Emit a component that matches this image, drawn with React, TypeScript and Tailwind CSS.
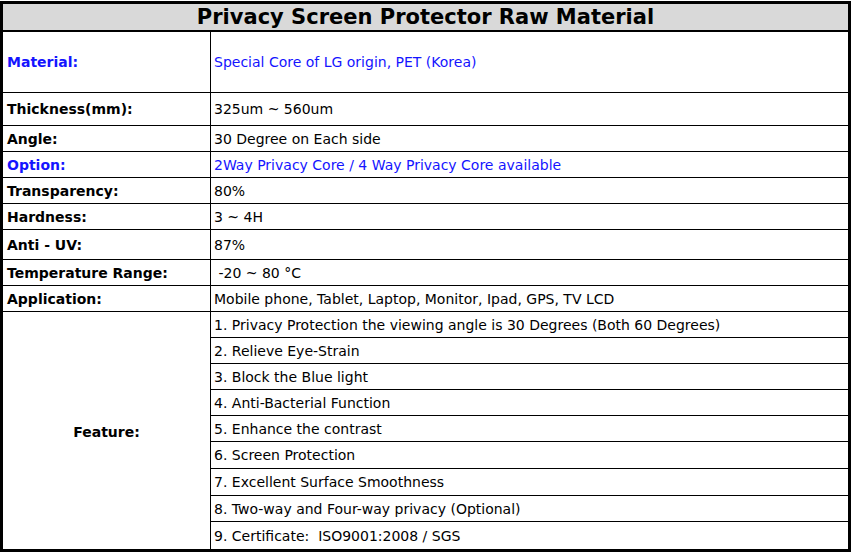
const specs: { label: string; value: string; h: string; blue?: boolean }[] = [
  { label: "Material:", value: "Special Core of LG origin, PET (Korea)", h: "h-[61px]", blue: true },
  { label: "Thickness(mm):", value: "325um ~ 560um", h: "h-[33px]" },
  { label: "Angle:", value: "30 Degree on Each side", h: "h-[26px]" },
  { label: "Option:", value: "2Way Privacy Core / 4 Way Privacy Core available", h: "h-[26px]", blue: true },
  { label: "Transparency:", value: "80%", h: "h-[26px]" },
  { label: "Hardness:", value: "3 ~ 4H", h: "h-[26px]" },
  { label: "Anti - UV:", value: "87%", h: "h-[30px]" },
  { label: "Temperature Range:", value: " -20 ~ 80 °C", h: "h-[26px]" },
  { label: "Application:", value: "Mobile phone, Tablet, Laptop, Monitor, Ipad, GPS, TV LCD", h: "h-[26px]" },
];

const features: { text: string; h: string }[] = [
  { text: "1. Privacy Protection the viewing angle is 30 Degrees (Both 60 Degrees)", h: "h-[26px] border-b" },
  { text: "2. Relieve Eye-Strain", h: "h-[26px] border-b" },
  { text: "3. Block the Blue light", h: "h-[26px] border-b" },
  { text: "4. Anti-Bacterial Function", h: "h-[26px] border-b" },
  { text: "5. Enhance the contrast", h: "h-[26px] border-b" },
  { text: "6. Screen Protection", h: "h-[27px] border-b" },
  { text: "7. Excellent Surface Smoothness", h: "h-[27px] border-b" },
  { text: "8. Two-way and Four-way privacy (Optional)", h: "h-[26px] border-b" },
  { text: "9. Certificate:  ISO9001:2008 / SGS", h: "flex-1" },
];

export default function App() {
  return (
    <div className="bg-white w-[851px] h-[552px] pt-px font-['DejaVu_Sans',Verdana,sans-serif] text-[14px] text-black">
      <div className="w-[851px] h-[551px] border-[3px] border-black flex flex-col">
        {/* title */}
        <div className="h-[28px] shrink-0 bg-[#d9d9d9] border-b-2 border-black flex items-center justify-center">
          <span className="text-[21px] font-bold leading-none pt-px">Privacy Screen Protector Raw Material</span>
        </div>

        {specs.map((s) => (
          <div key={s.label} className={`${s.h} shrink-0 flex border-b border-black`}>
            <div
              className={`w-[208px] shrink-0 border-r border-black flex items-center pl-[4px] pt-px font-bold ${
                s.blue ? "text-[#1414ff]" : ""
              }`}
            >
              {s.label}
            </div>
            <div className={`flex items-center pl-[3px] pt-px whitespace-pre ${s.blue ? "text-[#1414ff]" : ""}`}>
              {s.value}
            </div>
          </div>
        ))}

        {/* features */}
        <div className="flex-1 flex">
          <div className="w-[208px] shrink-0 border-r border-black flex items-center justify-center font-bold pt-[3px]">
            Feature:
          </div>
          <div className="flex-1 flex flex-col">
            {features.map((f) => (
              <div key={f.text} className={`${f.h} shrink-0 border-black flex items-center pl-[3px] pt-px whitespace-pre`}>
                {f.text}
              </div>
            ))}
          </div>
        </div>
      </div>
    </div>
  );
}
